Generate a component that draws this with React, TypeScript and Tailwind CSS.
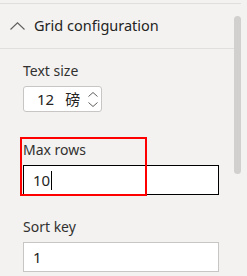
import React from "react";

const font = { fontFamily: '"Segoe UI", "Noto Sans", "Open Sans", sans-serif' };

function Field({ label, value, focused }: { label: string; value: string; focused?: boolean }) {
  return (
    <div className="flex flex-col">
      <div className="text-[14px] leading-[19px] text-[#323130]">{label}</div>
      <div
        className={`mt-[6px] h-[30px] w-[196px] flex items-center pl-[9px] bg-white text-[15px] text-[#252423] border ${
          focused ? "border-[#000000]" : "border-[#c8c6c4]"
        }`}
      >
        {value}
        {focused && <span className="inline-block w-px h-[19px] bg-[#000000] ml-px" />}
      </div>
    </div>
  );
}

export default function App() {
  return (
    <div className="relative w-[247px] h-[276px] overflow-hidden bg-[#f3f2f1]" style={font}>
      <div className="w-[241px] pt-[3px]">
        <div className="h-[46px] flex items-center gap-[9px] pl-[10px] border-y border-[#e1dfdd]">
          <svg width="15" height="8" viewBox="0 0 15 8" className="text-[#605e5c]">
            <path d="M0.5 7.5 L7.5 0.8 L14.5 7.5" fill="none" stroke="currentColor" strokeWidth="1.1" />
          </svg>
          <span className="text-[14.5px] text-[#252423] pb-[1px]">Grid configuration</span>
        </div>

        <div className="pl-[23px] pt-[12px] flex flex-col">
          <div className="text-[14px] leading-[19px] text-[#323130]">Text size</div>
          <div className="mt-[6px] h-[26px] w-[79px] flex items-center bg-white border border-[#c8c6c4] rounded-[3px]">
            <span className="pl-[13px] text-[15px] text-[#252423]">12</span>
            <span className="pl-[11px] text-[15px] text-[#252423]" style={{ fontFamily: '"Noto Sans CJK SC", sans-serif' }}>
              磅
            </span>
            <div className="ml-auto mr-[3px] flex flex-col gap-[5px] text-[#605e5c]">
              <svg width="10" height="5" viewBox="0 0 10 5">
                <path d="M0.5 4.5 L5 0.5 L9.5 4.5" fill="none" stroke="currentColor" strokeWidth="1" />
              </svg>
              <svg width="10" height="5" viewBox="0 0 10 5">
                <path d="M0.5 0.5 L5 4.5 L9.5 0.5" fill="none" stroke="currentColor" strokeWidth="1" />
              </svg>
            </div>
          </div>

          <div className="mt-[28px]">
            <Field label="Max rows" value="10" focused />
          </div>
          <div className="mt-[22px]">
            <Field label="Sort key" value="1" />
          </div>
        </div>
      </div>

      {/* highlight annotation */}
      <div className="absolute left-[20px] top-[137px] w-[127px] h-[59px] border-2 border-[#ff0000] pointer-events-none" />

      {/* scrollbar */}
      <div className="absolute left-[234px] top-[16px] w-[7px] h-[158px] rounded-full bg-[#d2d0ce]" />
    </div>
  );
}
